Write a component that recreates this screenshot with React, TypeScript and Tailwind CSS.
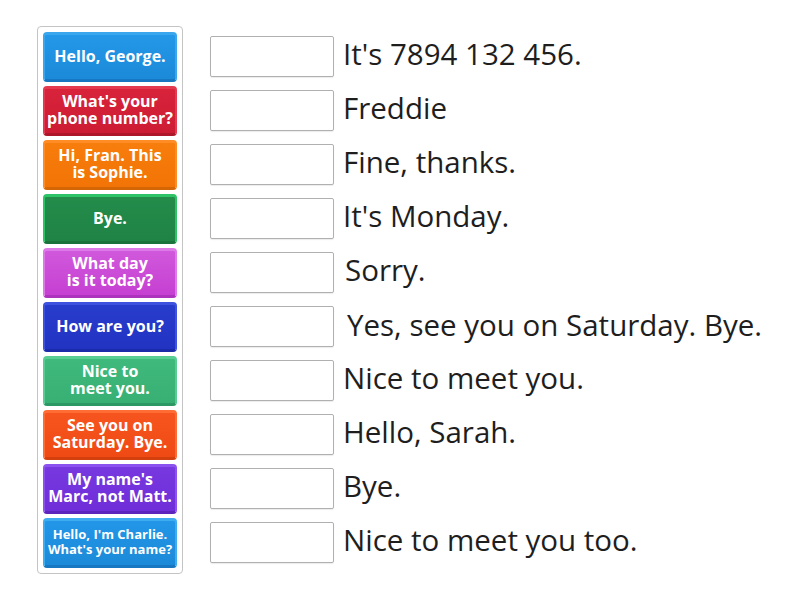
const TILES = [
  { lines: ['Hello, George.'], rim: '#3aa6ee', fill: 'from-[#2498e8] to-[#1b8ad8]', base: '#1777c0', small: false },
  { lines: ["What's your", 'phone number?'], rim: '#e43a50', fill: 'from-[#d8233b] to-[#cc1c33]', base: '#ad1729', small: false },
  { lines: ['Hi, Fran. This', 'is Sophie.'], rim: '#ff8c24', fill: 'from-[#f77d0c] to-[#f27406]', base: '#d46604', small: false },
  { lines: ['Bye.'], rim: '#2cc467', fill: 'from-[#238c4b] to-[#1f8345]', base: '#19733b', small: false },
  { lines: ['What day', 'is it today?'], rim: '#de7ae8', fill: 'from-[#d058dc] to-[#c63fd2]', base: '#ad33bd', small: false },
  { lines: ['How are you?'], rim: '#3d52de', fill: 'from-[#283ccc] to-[#2233c2]', base: '#1b2aa8', small: false },
  { lines: ['Nice to', 'meet you.'], rim: '#58cc92', fill: 'from-[#40b97d] to-[#38b074]', base: '#2c9863', small: false },
  { lines: ['See you on', 'Saturday. Bye.'], rim: '#ff6c34', fill: 'from-[#f6541e] to-[#f04a14]', base: '#d3400e', small: false },
  { lines: ["My name's", 'Marc, not Matt.'], rim: '#8c52f0', fill: 'from-[#7838e0] to-[#6f2ed8]', base: '#5d24bd', small: false },
  { lines: ["Hello, I'm Charlie.", "What's your name?"], rim: '#3eacf0', fill: 'from-[#2396e8] to-[#1b8ad8]', base: '#1777c0', small: true },
];

// a few answers sit a touch off the common left edge in the original
const ANSWERS = [
  { text: "It's 7894 132 456.", cls: 'ml-[9px] -mt-[3px]' },
  { text: 'Freddie', cls: 'ml-[9px] -mt-[3px]' },
  { text: 'Fine, thanks.', cls: 'ml-[9px] -mt-[3px]' },
  { text: "It's Monday.", cls: 'ml-[9px] -mt-[3px]' },
  { text: 'Sorry.', cls: 'ml-[11px] -mt-[3px]' },
  { text: 'Yes, see you on Saturday. Bye.', cls: 'ml-[13px] -mt-[2px]' },
  { text: 'Nice to meet you.', cls: 'ml-[9px] -mt-[3px]' },
  { text: 'Hello, Sarah.', cls: 'ml-[9px] -mt-[3px]' },
  { text: 'Bye.', cls: 'ml-[9px] -mt-[3px]' },
  { text: 'Nice to meet you too.', cls: 'ml-[9px] -mt-[3px]' },
];

function Tile({ tile }: { tile: (typeof TILES)[number] }) {
  return (
    <div
      className={[
        'flex h-[50px] w-full flex-col items-center justify-center rounded-[4px] border-x-2 border-t-[3px] border-b-[3px] bg-gradient-to-b pb-[2px] text-center font-bold text-white',
        tile.fill,
        tile.small ? 'text-[13px] leading-[15px]' : 'text-[16px] leading-[17px]',
      ].join(' ')}
      style={{ borderTopColor: tile.rim, borderLeftColor: tile.rim, borderRightColor: tile.rim, borderBottomColor: tile.base }}
    >
      {tile.lines.map((l) => (
        <span key={l} className="block whitespace-nowrap">
          {l}
        </span>
      ))}
    </div>
  );
}

export default function App() {
  return (
    <div
      className="flex min-h-[600px] w-[800px] items-start bg-white pl-[37px] pt-[26px]"
      style={{ fontFamily: '"Open Sans", "Noto Sans", sans-serif' }}
    >
      <div className="flex w-[146px] flex-col gap-[4px] rounded-[4px] border border-[#c4c4c4] p-[5px]">
        {TILES.map((t) => (
          <Tile key={t.lines.join(' ')} tile={t} />
        ))}
      </div>

      <div className="ml-[27px] mt-[10px] flex flex-col gap-[13px]">
        {ANSWERS.map((a) => (
          <div key={a.text} className="flex h-[41px] items-start">
            <div className="h-[41px] w-[124px] shrink-0 rounded-[2px] border border-[#b0b0b0] bg-white shadow-[0_1px_1px_rgba(0,0,0,0.08)]" />
            <span
              className={[
                'whitespace-nowrap text-[29.5px] leading-[normal] text-[#1e1e1e]',
                a.cls,
              ].join(' ')}
            >
              {a.text}
            </span>
          </div>
        ))}
      </div>
    </div>
  );
}
